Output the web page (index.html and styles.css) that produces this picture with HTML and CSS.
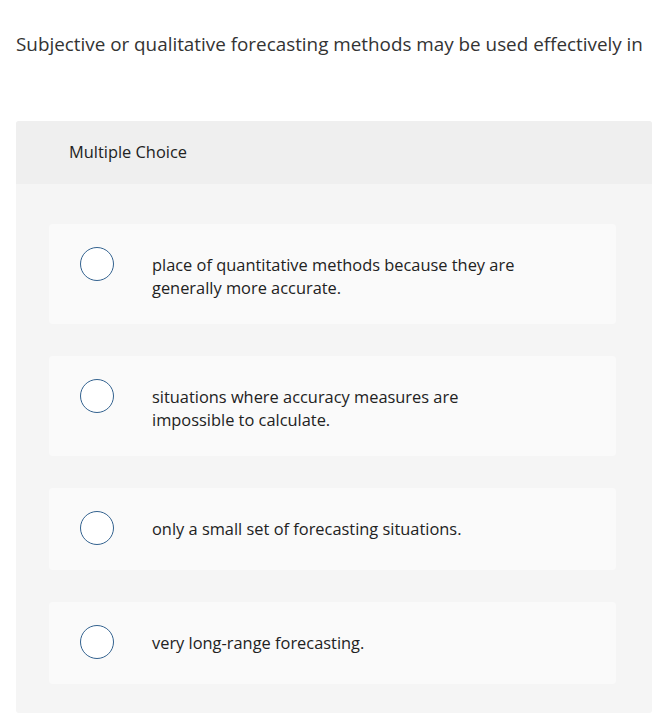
FILE: index.html
```html
<!DOCTYPE html>
<html>
<head>
<meta charset="utf-8">
<link rel="stylesheet" href="styles.css">
</head>
<body>
<div class="page">
  <p class="question">Subjective or qualitative forecasting methods may be used effectively in</p>
  <div class="panel">
    <div class="panel-head">Multiple Choice</div>
    <div class="panel-body">
      <div class="option"><span class="radio"></span><span class="label">place of quantitative methods because they are generally more accurate.</span></div>
      <div class="option"><span class="radio"></span><span class="label">situations where accuracy measures are impossible to calculate.</span></div>
      <div class="option"><span class="radio"></span><span class="label">only a small set of forecasting situations.</span></div>
      <div class="option"><span class="radio"></span><span class="label">very long-range forecasting.</span></div>
    </div>
  </div>
</div>
</body>
</html>
```

FILE: styles.css
```css
html, body { margin: 0; padding: 0; background: #fff; }
body { font-family: "Open Sans", "Liberation Sans", sans-serif; color: #333; }
.page { padding: 0 12px 0 16px; }
.question {
  margin: 0;
  padding-top: 31px;
  font-size: 18.85px;
  line-height: 26px;
  color: #333;
  white-space: nowrap;
}
.panel {
  margin-top: 64px;
  border-radius: 3px;
  overflow: hidden;
  background: #f5f5f5;
}
.panel-head {
  background: #efefef;
  height: 63px;
  box-sizing: border-box;
  padding: 20px 0 0 53px;
  font-size: 16.4px;
  line-height: 22px;
  color: #222;
}
.panel-body {
  padding: 40px 36px 29px 33px;
  display: flex;
  flex-direction: column;
  gap: 32px;
}
.option {
  background: #fafafa;
  border-radius: 4px;
  display: flex;
  align-items: flex-start;
  padding: 23px 20px 23px 31px;
}
.radio {
  flex: none;
  width: 34px;
  height: 34px;
  margin-bottom: 2px;
  box-sizing: border-box;
  border: 1.5px solid #33628f;
  border-radius: 50%;
  background: #fff;
}
.label {
  margin-left: 38px;
  padding: 6px 0 2px;
  font-size: 16.4px;
  line-height: 23px;
  color: #222;
  max-width: 375px;
}
```
